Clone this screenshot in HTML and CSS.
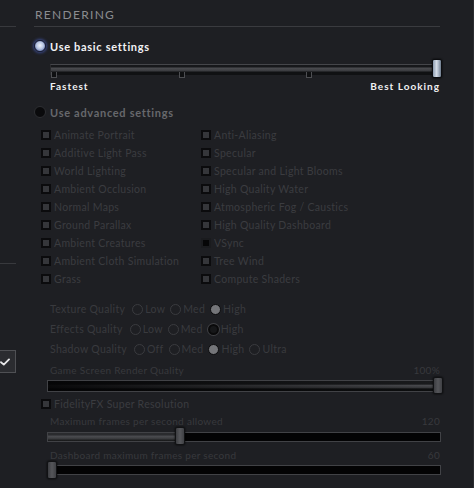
FILE: index.html
```html
<!DOCTYPE html>
<html lang="en">
<head>
    <meta charset="UTF-8">
    <meta name="viewport" content="width=device-width, initial-scale=1.0">
    <title>Video Settings</title>
    <link rel="stylesheet" href="styles.css">
</head>
<body>
    <div class="frame">
        <div class="sidebar">
            <div class="side-rule first"></div>
            <div class="side-rule second"></div>
            <div class="side-check">
                <svg width="10" height="8" viewBox="0 0 10 8"><path d="M1 4.2 L3.8 6.6 L9 1.4" fill="none" stroke="#e8e8ea" stroke-width="1.8" stroke-linecap="round" stroke-linejoin="round"/></svg>
            </div>
        </div>

        <div class="panel">
            <div class="heading">Rendering</div>

            <div class="mode basic"><span class="mode-radio on"></span>Use basic settings</div>
            <div class="preset">
                <div class="preset-track"></div>
                <span class="tick" style="left: 1px"></span>
                <span class="tick" style="left: 129px"></span>
                <span class="tick" style="left: 256px"></span>
                <span class="preset-thumb"></span>
            </div>
            <div class="preset-labels"><span>Fastest</span><span>Best Looking</span></div>

            <div class="mode advanced"><span class="mode-radio"></span>Use advanced settings</div>

            <div class="options">
                <label class="option"><span class="box"></span>Animate Portrait</label>
                <label class="option"><span class="box"></span>Anti-Aliasing</label>
                <label class="option"><span class="box"></span>Additive Light Pass</label>
                <label class="option"><span class="box"></span>Specular</label>
                <label class="option"><span class="box"></span>World Lighting</label>
                <label class="option"><span class="box"></span>Specular and Light Blooms</label>
                <label class="option"><span class="box"></span>Ambient Occlusion</label>
                <label class="option"><span class="box"></span>High Quality Water</label>
                <label class="option"><span class="box"></span>Normal Maps</label>
                <label class="option"><span class="box"></span>Atmospheric Fog / Caustics</label>
                <label class="option"><span class="box"></span>Ground Parallax</label>
                <label class="option"><span class="box"></span>High Quality Dashboard</label>
                <label class="option"><span class="box"></span>Ambient Creatures</label>
                <label class="option"><span class="box checked"></span>VSync</label>
                <label class="option"><span class="box"></span>Ambient Cloth Simulation</label>
                <label class="option"><span class="box"></span>Tree Wind</label>
                <label class="option"><span class="box"></span>Grass</label>
                <label class="option"><span class="box"></span>Compute Shaders</label>
            </div>

            <div class="quality">
                <div class="q-row">
                    <span class="q-name">Texture Quality</span>
                    <span class="q-radio"></span>Low
                    <span class="q-radio"></span>Med
                    <span class="q-radio on"></span>High
                </div>
                <div class="q-row">
                    <span class="q-name">Effects Quality</span>
                    <span class="q-radio"></span>Low
                    <span class="q-radio"></span>Med
                    <span class="q-radio dark"></span>High
                </div>
                <div class="q-row">
                    <span class="q-name">Shadow Quality</span>
                    <span class="q-radio"></span>Off
                    <span class="q-radio"></span>Med
                    <span class="q-radio on"></span>High
                    <span class="q-radio"></span>Ultra
                </div>
            </div>

            <div class="range-head first"><span>Game Screen Render Quality</span><span>100%</span></div>
            <div class="range render">
                <div class="range-track"><div class="range-fill" style="width: 100%"></div></div>
                <span class="range-thumb" style="left: 386px"></span>
            </div>

            <label class="option single"><span class="box"></span>FidelityFX Super Resolution</label>

            <div class="range-head"><span>Maximum frames per second allowed</span><span>120</span></div>
            <div class="range fps">
                <div class="range-track"><div class="range-fill" style="width: 132px"></div></div>
                <span class="range-thumb" style="left: 128px"></span>
            </div>

            <div class="range-head dash"><span>Dashboard maximum frames per second</span><span>60</span></div>
            <div class="range dashfps">
                <div class="range-track"></div>
                <span class="range-thumb" style="left: 0"></span>
            </div>
        </div>
    </div>
</body>
</html>
```

FILE: styles.css
```css
body {
    margin: 0;
    padding: 0;
    background-color: #1e1f23;
    font-family: Lato, "Open Sans", sans-serif;
    overflow: hidden;
}
.frame {
    display: flex;
    width: 473px;
    height: 488px;
    border-right: 1px solid #2b2c30;
    overflow: hidden;
}

/* left strip, mostly cut off */
.sidebar {
    width: 16px;
    flex-shrink: 0;
}
.side-rule {
    height: 1px;
    background-color: #38393d;
}
.side-rule.first {
    margin-top: 26px;
}
.side-rule.second {
    margin-top: 236px;
}
.side-check {
    margin-top: 86px;
    margin-left: -10px;
    width: 26px;
    height: 23px;
    border: 1px solid #4f5054;
    background-color: #2b2c30;
    display: flex;
    align-items: center;
    justify-content: flex-end;
    padding-right: 5px;
    box-sizing: border-box;
}

.panel {
    width: 406px;
    margin-left: 18px;
    flex-shrink: 0;
}
.heading {
    height: 27px;
    box-sizing: border-box;
    padding-top: 6px;
    padding-left: 1px;
    line-height: 18px;
    font-size: 12px;
    letter-spacing: 1.3px;
    text-transform: uppercase;
    color: #8b8c90;
    border-bottom: 1px solid #3a3b3f;
}

.mode {
    display: flex;
    align-items: center;
    height: 18px;
    font-size: 11px;
    font-weight: bold;
    letter-spacing: 0.7px;
}
.mode.basic {
    margin-top: 10px;
    color: #f2f2f4;
}
.mode.advanced {
    margin-top: 9px;
    color: #67686c;
}
.mode-radio {
    width: 10px;
    height: 10px;
    border-radius: 50%;
    margin-right: 4px;
    background-color: #0a0a0c;
    border: 1px solid #2e2f33;
}
.mode-radio.on {
    background: radial-gradient(circle at 50% 45%, #eef2fb 0, #b9c6e2 45%, #6e7fb5 80%);
    border: 1px solid #1a1f3a;
    box-shadow: 0 0 3px 1px #3b4a8c;
}

.preset {
    position: relative;
    height: 22px;
    margin-top: 2px;
    margin-left: 16px;
    width: 390px;
}
.preset-track {
    position: absolute;
    top: 7px;
    left: 0;
    right: 0;
    height: 11px;
    box-sizing: border-box;
    border-top: 1px solid #45464a;
    border-left: 1px solid #2a2b2e;
    background: linear-gradient(#17181b 0, #17181b 2px, #4b4c50 3px, #3a3b3f 6px, #101113 7px, #101113 100%);
}
.tick {
    position: absolute;
    top: 15px;
    width: 6px;
    height: 6px;
    box-sizing: border-box;
    border: 1px solid #4d4e52;
    border-top: none;
    background-color: #0f1012;
}
.preset-thumb {
    position: absolute;
    top: 2px;
    left: 382px;
    width: 10px;
    height: 19px;
    box-sizing: border-box;
    border: 1px solid #0c0d10;
    border-radius: 2px;
    background: linear-gradient(to right, #8d9cb0, #d5dde8 45%, #a8b4c4 70%, #6e7b8c);
    box-shadow: 0 0 2px #000;
}
.preset-labels {
    display: flex;
    justify-content: space-between;
    margin-left: 16px;
    width: 390px;
    height: 15px;
    line-height: 15px;
    font-size: 10px;
    font-weight: bold;
    letter-spacing: 1px;
    color: #f0f0f2;
}

.options {
    display: grid;
    grid-template-columns: 160px 160px;
    grid-auto-rows: 18px;
    margin-top: 5px;
    margin-left: 7px;
}
.option {
    display: flex;
    align-items: center;
    font-size: 10.5px;
    letter-spacing: 0.3px;
    color: #3b3c40;
}
.box {
    width: 10px;
    height: 10px;
    box-sizing: border-box;
    border: 2px solid #0b0b0d;
    background-color: #35363a;
    margin-right: 3px;
    flex-shrink: 0;
}
.box.checked {
    background-color: #060607;
    border-color: #1a1b1e;
}

.quality {
    margin-top: 11px;
    margin-left: 16px;
}
.q-row {
    display: flex;
    align-items: center;
    height: 20px;
    font-size: 10.5px;
    letter-spacing: 0.3px;
    color: #393a3e;
}
.q-name {
    margin-right: 2px;
}
.q-radio {
    width: 11px;
    height: 11px;
    box-sizing: border-box;
    border-radius: 50%;
    border: 1.5px solid #3a3b3f;
    margin-left: 5px;
    margin-right: 2px;
}
.q-radio.on {
    background-color: #747579;
    border: 1.5px solid #0b0b0d;
}
.q-radio.dark {
    background-color: #161719;
    border: 2px solid #0a0a0b;
    box-shadow: 0 0 0 1px #404145;
}

.range-head {
    display: flex;
    justify-content: space-between;
    margin-left: 16px;
    width: 390px;
    height: 12px;
    line-height: 12px;
    margin-top: 3px;
    font-size: 10px;
    letter-spacing: 0.3px;
    color: #38393d;
}
.range-head.first {
    margin-top: 5px;
    height: 13px;
    line-height: 13px;
}
.range-head.dash {
    margin-top: 4px;
    height: 11px;
    line-height: 11px;
}
.range {
    position: relative;
    margin-left: 13px;
    width: 394px;
    height: 19px;
}
.range.render {
    height: 18px;
}
.range-track {
    position: absolute;
    left: 0;
    right: 0;
    top: 5px;
    height: 10px;
    box-sizing: border-box;
    border: 1px solid #414246;
    background-color: #030304;
    overflow: hidden;
}
.range.render .range-track {
    top: 3px;
    height: 12px;
}
.range.dashfps .range-track {
    top: 4px;
}
.range-fill {
    height: 100%;
    background: linear-gradient(#2a2b2e 0, #2a2b2e 20%, #4a4b4f 45%, #3a3b3e 70%, #121314 100%);
}
.range.render .range-fill {
    background: linear-gradient(to right, rgba(3, 3, 4, 0.9), rgba(3, 3, 4, 0) 100%),
        linear-gradient(#1a1b1d 0, #1a1b1d 30%, #4a4b4f 45%, #3a3b3e 65%, #0d0e0f 80%);
}
.range-thumb {
    position: absolute;
    top: 0;
    width: 10px;
    height: 18px;
    box-sizing: border-box;
    border: 1px solid #111214;
    border-radius: 2px;
    background: linear-gradient(to right, #3c3d41, #55565a 50%, #3f4044);
    box-shadow: 0 0 2px #000;
}
.range.render .range-thumb {
    height: 17px;
}
.option.single {
    height: 16px;
    margin-top: 1px;
    margin-left: 7px;
}
```
